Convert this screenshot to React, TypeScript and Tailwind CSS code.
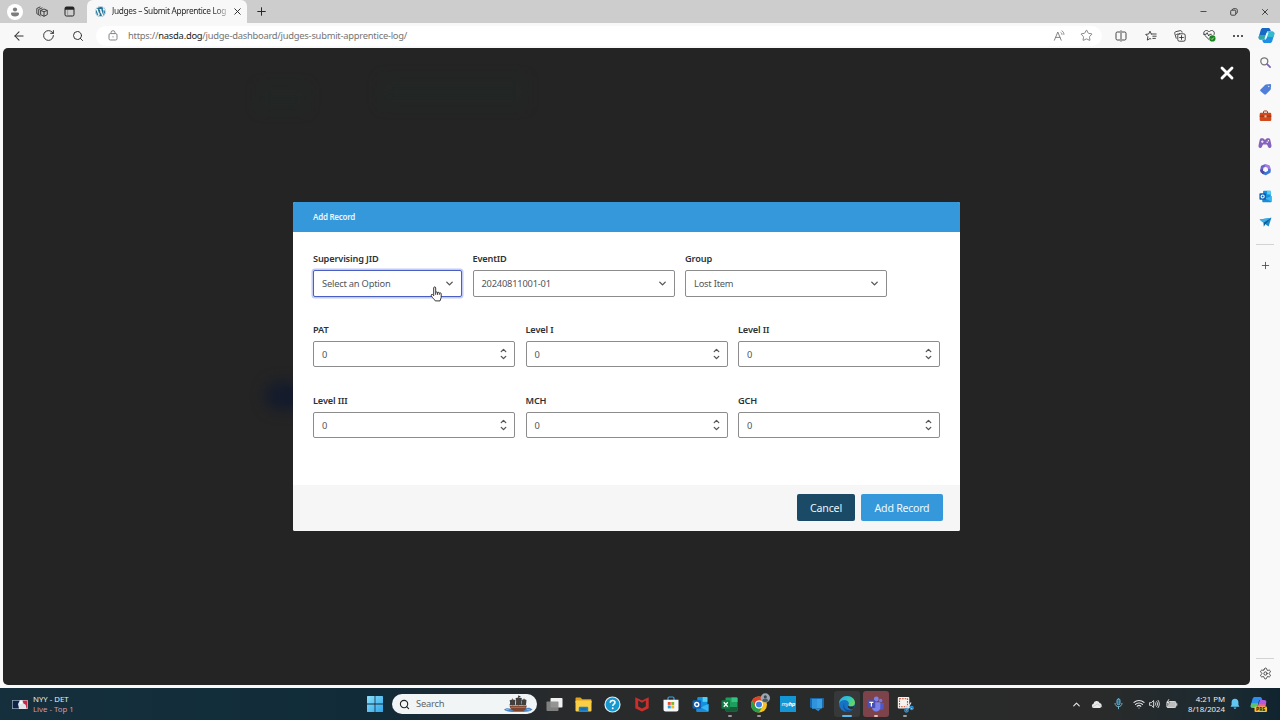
import type { ReactNode } from "react";
import {
  ArrowLeft,
  ChevronDown,
  ChevronUp,
  Minus,
  Plus,
  RotateCw,
  Search,
  Settings,
  Star,
  Wifi,
  X,
} from "lucide-react";
import { FaWordpress } from "react-icons/fa";

interface SlotProps {
  className?: string;
  children?: ReactNode;
}

function Slot({ className = "", children }: SlotProps) {
  return (
    <div className={`flex shrink-0 items-center justify-center ${className}`}>
      {children}
    </div>
  );
}

/* ---------- browser icons ---------- */

function WorkspacesIcon() {
  return (
    <svg width="12" height="12" viewBox="0 0 12 12" fill="none" stroke="#333" strokeWidth="0.9" strokeLinejoin="round">
      <path d="M4.6 4.4 8 3l3.3 1.4v4.2L8 10.3 4.6 8.6Z" />
      <path d="M4.6 4.4 8 5.8l3.3-1.4M8 5.8v4.5" />
      <path d="M2.7 8.8V3.4L6.4 1.8M.8 7.6V2.5L4.4.8" />
      <path d="M2.7 8.8 4.6 10M.8 7.6l1.9 1.2" />
    </svg>
  );
}

function TabActionsIcon() {
  return (
    <svg width="11" height="11" viewBox="0 0 11 11" fill="none">
      <rect x="1" y="1" width="9" height="9" rx="1.4" stroke="#222" />
      <path d="M1 2.2C1 1.4 1.5 1 2.2 1h6.6c.7 0 1.2.4 1.2 1.2v1.6H1Z" fill="#222" />
      <path d="M3.6 4v6" stroke="#888" strokeWidth=".7" />
    </svg>
  );
}

function LockIcon() {
  return (
    <svg width="10" height="11" viewBox="0 0 10 11" fill="none" stroke="#777" strokeWidth=".9">
      <rect x="1" y="3.6" width="8" height="6.4" rx="1.3" />
      <path d="M3 3.6V2.7a2 2 0 0 1 4 0v.9" />
      <circle cx="5" cy="6.8" r=".6" fill="#777" stroke="none" />
    </svg>
  );
}

function ReadAloudIcon() {
  return (
    <svg width="13" height="12" viewBox="0 0 13 12" fill="none" stroke="#777" strokeWidth=".9" strokeLinecap="round" strokeLinejoin="round">
      <path d="M1.4 10.2 4.8 2l3.4 8.2M2.6 7.4H7" />
      <path d="M8 2.600c.7.400 1 1 1 1.800M9 .9c1.300.8 1.900 1.900 1.900 3.500" />
    </svg>
  );
}

function SplitIcon() {
  return (
    <svg width="12" height="12" viewBox="0 0 12 12" fill="none" stroke="#333" strokeWidth=".9" strokeLinecap="round">
      <path d="M4.600 2H2.300C1.500 2 1 2.500 1 3.300v5.400C1 9.500 1.500 10 2.300 10h2.300M7.400 2h2.300c.8 0 1.300.5 1.300 1.300v5.400c0 .8-.5 1.300-1.300 1.300H7.400M6 .7v10.600" />
    </svg>
  );
}

function FavoritesIcon() {
  return (
    <svg width="12" height="12" viewBox="0 0 12 12" fill="none" stroke="#333" strokeWidth=".9" strokeLinecap="round" strokeLinejoin="round">
      <path d="M6.300 4 5 1.200 3.700 4 .7 4.400l2.200 2.200-.6 3.500L5 8.500l.8.4M6.300 4h4.900M7.800 6.200h3.400M7.800 8.400h2.600" />
    </svg>
  );
}

function CollectionsIcon() {
  return (
    <svg width="12" height="12" viewBox="0 0 12 12" fill="none" stroke="#333" strokeWidth=".9" strokeLinecap="round" strokeLinejoin="round">
      <rect x="3.800" y="3.800" width="7.400" height="7.400" rx="1.500" />
      <path d="M7.500 5.600v3.800M5.600 7.500h3.800" />
      <path d="M2.200 8.200 .8 3.600C.5 2.700.9 2 1.700 1.700L6 .7c.9-.2 1.500.1 1.800.9l.2.600M3.800 4l-1.200.4" />
    </svg>
  );
}

function EssentialsIcon() {
  return (
    <svg width="13" height="13" viewBox="0 0 13 13" fill="none">
      <path
        d="M6 10.500 1.600 6.200C.4 5 .5 3.200 1.600 2.200 2.800 1.200 4.500 1.300 5.500 2.400l.6.6.6-.6c1-1.100 2.700-1.200 3.800-.2.9.9 1.100 2.200.6 3.300M.9 5.300h2.300l1-1.600L5.700 7l1.100-1.700h1.500"
        stroke="#333"
        strokeWidth=".9"
        strokeLinecap="round"
        strokeLinejoin="round"
      />
      <circle cx="9.400" cy="9.400" r="3.100" fill="#17841c" />
      <path d="m8 9.500 1 1 1.800-2" stroke="#d9f2da" strokeWidth=".8" />
    </svg>
  );
}

function CopilotIcon() {
  return (
    <svg width="17" height="17" viewBox="0 0 17 17">
      <path d="M5.200 1h5.200c1 0 1.600.6 1.900 1.500l.5 1.600H9.600L7 12.600H3C1 12.600.2 11.300.8 9.400l2-6.700C3.200 1.600 4 1 5.200 1Z" fill="#1769c4" />
      <path d="M1.200 8h6.900L7 12.600H3C1 12.600.2 11.300.8 9.400Z" fill="#2fa6a8" />
      <path d="M11.800 16H6.600c-1 0-1.600-.6-1.900-1.500l-.5-1.600h3.200L10 4.400h4c2 0 2.800 1.300 2.200 3.200l-2 6.700c-.4 1.100-1.200 1.700-2.400 1.700Z" fill="#1f8fe6" />
      <path d="M10 4.400h4c2 0 2.800 1.300 2.200 3.200L15.600 10H8.300Z" fill="#35b9cf" />
      <path d="M8.600 5.600h2L8.400 11.800h-2Z" fill="#e9fbff" />
    </svg>
  );
}

function RestoreIcon() {
  return (
    <svg width="8" height="8" viewBox="0 0 8 8" fill="none" stroke="#333" strokeWidth=".9">
      <rect x=".7" y="2.200" width="5" height="5" rx="1" />
      <path d="M2.500 2V1.700c0-.6.4-1 1-1h2.300c.9 0 1.500.6 1.500 1.500v2.200c0 .6-.4 1-1 1H6" />
    </svg>
  );
}

/* ---------- sidebar icons ---------- */

function SideSearchIcon() {
  return (
    <svg width="13" height="13" viewBox="0 0 13 13" fill="none" strokeLinecap="round">
      <circle cx="5.300" cy="5.300" r="3.500" stroke="#777" strokeWidth="1.300" />
      <path d="m8.100 8.100 3 3" stroke="#7b62b5" strokeWidth="1.700" />
    </svg>
  );
}

function TagIcon() {
  return (
    <svg width="13" height="13" viewBox="0 0 13 13">
      <path d="M7 1.500 11.200 1c.6 0 .9.300.9.900l-.3 4.200c0 .4-.2.700-.5 1L7 11.300c-.6.6-1.200.6-1.800 0L1.600 8.200C1 7.600 1 7 1.500 6.400L6 2c.3-.3.600-.5 1-.5Z" fill="#4f7fd9" />
      <circle cx="9.700" cy="3.500" r=".8" fill="#cfe0ff" />
    </svg>
  );
}

function BriefcaseIcon() {
  return (
    <svg width="13" height="12" viewBox="0 0 13 12">
      <path d="M4.500 3V1.800c0-.5.3-.8.8-.8h2.400c.5 0 .8.300.8.800V3" fill="none" stroke="#963216" strokeWidth="1" />
      <rect x=".7" y="2.700" width="11.600" height="8.300" rx="1.200" fill="#d0481c" />
      <path d="M.7 6.200h11.600" stroke="#8c2c10" strokeWidth=".8" />
      <rect x="5.400" y="5.200" width="2.200" height="2.200" rx=".4" fill="#f5b48d" />
    </svg>
  );
}

function GamesIcon() {
  return (
    <svg width="14" height="12" viewBox="0 0 14 12">
      <path d="M3.600 1.200h1.700l.9 1.400h1.600l.9-1.400h1.700c.9 0 1.500.5 1.800 1.400l1.200 5.300c.4 1.800-.4 3-1.500 3-.9 0-1.400-.5-2-1.500L9 7.400H5L4.100 9.400c-.6 1-1.100 1.500-2 1.500-1.100 0-1.900-1.200-1.500-3l1.200-5.300c.3-.9.900-1.400 1.800-1.400Z" fill="#8562bd" />
      <path d="M4.300 3.400v2.600M3 4.700h2.600" stroke="#fff" strokeWidth=".8" />
      <circle cx="9.200" cy="5.200" r=".7" fill="#fff" />
      <circle cx="10.400" cy="3.800" r=".7" fill="#fff" />
    </svg>
  );
}

function M365Icon() {
  return (
    <svg width="13" height="13" viewBox="0 0 13 13" fill="none" strokeWidth="2.800" strokeLinejoin="round">
      <path d="M7 2.300 3.200 3.800 2.500 8" stroke="#6a63c9" />
      <path d="M6 2.200 9.600 3.600 10.500 6.500" stroke="#a77be0" />
      <path d="M3.500 9.400 6.600 10.800 10.200 8.800 10.500 6" stroke="#3b78d4" />
      <path d="M2.500 6.500 2.700 8.400 5 10.200" stroke="#4d4aa6" />
    </svg>
  );
}

function OutlookIcon({ size = 13 }: { size?: number }) {
  return (
    <svg width={size} height={size} viewBox="0 0 16 16">
      <rect x="5" y="1" width="9.500" height="9" rx="1" fill="#1490df" />
      <path d="M10 1h4.500v4.500H10Z" fill="#50d0f5" />
      <path d="M4 7.500 9.500 11l6-3.500V14c0 .6-.4 1-1 1H5c-.6 0-1-.4-1-1Z" fill="#1b8ad8" />
      <path d="M15.500 7.500v7L8 10.600Z" fill="#35b8f1" />
      <rect x=".5" y="4" width="8" height="8" rx="1" fill="#0a5fb4" />
      <circle cx="4.500" cy="8" r="1.900" fill="none" stroke="#fff" strokeWidth="1.300" />
    </svg>
  );
}

function PlaneIcon() {
  return (
    <svg width="13" height="11" viewBox="0 0 13 11">
      <path d="M.6 2.600 12.400.8 9.600 9.600 6.500 7.200Z" fill="#1c87c9" />
      <path d="M.6 2.600 12.400.8 4.500 6Z" fill="#3aaee6" />
      <path d="M4.500 6 12.400.8 6.300 7.200 4.800 9.800Z" fill="#0f5d95" />
    </svg>
  );
}

/* ---------- taskbar icons ---------- */

function MlbIcon() {
  return (
    <svg width="16" height="9" viewBox="0 0 16 9">
      <rect width="16" height="9" rx="1.300" fill="#dfe6ea" />
      <path d="M1.500.6h6.300L6 4l1 4.400H1.500a1 1 0 0 1-1-1V1.600a1 1 0 0 1 1-1Z" fill="#0b2347" />
      <path d="M10.500.6h4a1 1 0 0 1 1 1v5.800a1 1 0 0 1-1 1l-.8-3.600-2.200-1.300Z" fill="#c32a48" />
      <circle cx="9" cy="2.500" r="1.300" fill="#fff" />
    </svg>
  );
}

function WindowsIcon() {
  return (
    <svg width="16" height="16" viewBox="0 0 16 16">
      <defs>
        <linearGradient id="win" x1="0" y1="0" x2="1" y2="1">
          <stop offset="0" stopColor="#8be0fb" />
          <stop offset="1" stopColor="#2fa5ea" />
        </linearGradient>
      </defs>
      <path d="M0 .6C0 .3.300 0 .6 0h7v7.600H0ZM8.400 0h7c.3 0 .6.300.6.600v7H8.400ZM0 8.400h7.600V16h-7a.6.600 0 0 1-.6-.6ZM8.400 8.400H16v7c0 .3-.3.600-.6.600h-7Z" fill="url(#win)" />
    </svg>
  );
}

function ShipIcon() {
  return (
    <svg width="30" height="18" viewBox="0 0 30 18">
      <path d="M1 14.500c3-2 5-1 7-.6h14c2-1.500 5-1.600 7.500.6-2 2.200-6 2.400-9 2.400H9c-3 0-6.500-.6-8-2.400Z" fill="#4b86c6" />
      <path d="M6.500 10.500h17.300c-.4 3-1.600 5-3.500 5.500H11c-2.300-.5-4-2.500-4.500-5.500Z" fill="#7b4530" />
      <path d="M8 12.300h14.500" stroke="#c08451" strokeWidth=".8" />
      <path d="M6.500 5.500c2-1.500 4-1.300 6-.5l-.5 5H6.400c.9-1.300 1-2.600.1-4.500ZM12.500 3.300c2-1.300 4.500-1 6.300-.2l-.6 7h-5.700c.8-2 .9-4.700 0-6.800ZM18.700 5c1.500-1 3.500-.8 4.800 0L23 10h-4.800c.7-1.500 1-3.500.5-5Z" fill="#3d3f41" />
      <path d="M15.500.6v10M9.500 3.500v7M21 3.500v7" stroke="#4d4037" strokeWidth=".7" />
      <path d="M15.500.6 18 1.500l-2.500 1Z" fill="#333" />
      <path d="m3 14.800 3-.8M24 14.500l3 .5" stroke="#d8e9f8" strokeWidth=".5" />
    </svg>
  );
}

function TaskViewIcon() {
  return (
    <svg width="17" height="15" viewBox="0 0 17 15">
      <rect x="4.500" y="1" width="12" height="9.500" rx=".8" fill="#f1f1f1" />
      <rect x=".5" y="4.500" width="12" height="9.500" rx=".8" fill="#8a8a8a" fillOpacity=".9" />
    </svg>
  );
}

function FolderIcon() {
  return (
    <svg width="17" height="15" viewBox="0 0 17 15">
      <path d="M.5 1.500c0-.6.4-1 1-1h4l1.800 1.700h8.200c.6 0 1 .4 1 1V6H.5Z" fill="#dfa321" />
      <rect x=".5" y="3.500" width="16" height="11" rx="1" fill="#fbce45" />
      <path d="M3.800 14.500v-3.300c0-.9.500-1.400 1.400-1.400h6.600c.9 0 1.400.5 1.400 1.400v3.300Z" fill="#1f7fc6" />
      <path d="M5.500 12h6" stroke="#0f5c98" />
    </svg>
  );
}

function HelpIcon() {
  return (
    <svg width="17" height="17" viewBox="0 0 17 17" fill="none">
      <circle cx="8.500" cy="8.500" r="7.500" fill="#1798cf" stroke="#d9f0fa" strokeWidth="1.200" />
      <path d="M6.200 6.700c0-1.500 1-2.300 2.400-2.300s2.400.8 2.400 2.100c0 1.700-2.300 1.700-2.300 3.600" stroke="#fff" strokeWidth="1.500" />
      <circle cx="8.700" cy="12.200" r=".95" fill="#fff" />
    </svg>
  );
}

function McAfeeIcon() {
  return (
    <svg width="14" height="16" viewBox="0 0 14 16">
      <path d="M.3 1.200 7 4.500l6.700-3.300v11L7 15.400.3 12.200Zm2.900 3.400v6L7 12.500l3.800-1.900v-6L7 6.700Z" fill="#c9302c" fillRule="evenodd" />
    </svg>
  );
}

function StoreIcon() {
  return (
    <svg width="16" height="16" viewBox="0 0 16 16">
      <path d="M5 4V2.200C5 1.500 5.400 1 6.200 1h3.600c.8 0 1.200.5 1.200 1.200V4" fill="none" stroke="#3aa3df" strokeWidth="1.200" />
      <path d="M.5 3.800h15v9.600c0 1.200-.8 2-2 2h-11c-1.200 0-2-.8-2-2Z" fill="#f5f7f9" />
      <path d="M4.800 6h2.900v2.900H4.800Z" fill="#e8502b" />
      <path d="M8.300 6h2.900v2.900H8.300Z" fill="#7cb52a" />
      <path d="M4.800 9.500h2.900v2.900H4.800Z" fill="#1fa2e4" />
      <path d="M8.300 9.500h2.900v2.900H8.300Z" fill="#f8b61c" />
    </svg>
  );
}

function ExcelIcon() {
  return (
    <svg width="17" height="15" viewBox="0 0 17 15">
      <rect x="4.500" y=".5" width="12" height="14" rx="1" fill="#1f9d5d" />
      <path d="M10.500.5h5c.6 0 1 .4 1 1V5h-6Z" fill="#33c481" />
      <path d="M4.500 10h12v3.500c0 .6-.4 1-1 1h-10c-.6 0-1-.4-1-1Z" fill="#165c38" />
      <rect x=".5" y="3.200" width="8.500" height="8.600" rx=".8" fill="#107c41" />
      <path d="m2.800 5.200 4 4.600M6.800 5.200l-4 4.600" stroke="#fff" strokeWidth="1.300" />
    </svg>
  );
}

function ChromeIcon() {
  return (
    <svg className="-mt-[2px] ml-[3px] shrink-0" width="22" height="20" viewBox="0 0 22 20">
      <circle cx="10" cy="11.500" r="8" fill="#f9c21a" />
      <path d="M3.100 7.500A8 8 0 0 1 16.900 7.500H10A4 4 0 0 0 6.500 13.500Z" fill="#e2402f" />
      <path d="M3.100 7.500A8 8 0 0 0 10 19.500l3.500-6A4 4 0 0 1 6.500 13.500Z" fill="#2a9d4b" />
      <circle cx="10" cy="11.500" r="3.900" fill="#fff" />
      <circle cx="10" cy="11.500" r="3" fill="#3f7fe8" />
      <circle cx="16.300" cy="5" r="4.700" fill="#9aa7b2" />
      <circle cx="16.300" cy="3.700" r="1.500" fill="#3b4854" />
      <path d="M13.300 7.800c.6-2 1.500-2.400 3-2.400s2.400.5 3 2.400c-1.600 1.700-4.400 1.700-6 0Z" fill="#4b5b69" />
    </svg>
  );
}

function BlueScreenIcon() {
  return (
    <svg width="16" height="15" viewBox="0 0 16 15">
      <rect x="1" y="1" width="14" height="10" rx="1" fill="#1a69ac" />
      <rect x="3" y="2" width="10" height="9.500" fill="#3aa0e4" />
      <path d="M3 2h5v9.500H3Z" fill="#2f94dc" />
      <path d="M5.500 11.500h6.500l-2.800 2.700-3.700-2.700Z" fill="#2a8bd2" />
    </svg>
  );
}

function EdgeIcon() {
  return (
    <svg width="18" height="18" viewBox="0 0 18 18">
      <defs>
        <linearGradient id="edge" x1="0" y1="0" x2="1" y2=".5">
          <stop offset="0" stopColor="#2aa8e8" />
          <stop offset=".6" stopColor="#32c8bd" />
          <stop offset="1" stopColor="#66d85c" />
        </linearGradient>
      </defs>
      <circle cx="9" cy="9" r="8" fill="#1672c4" />
      <path d="M1 8.500C1.300 4.300 4.700 1 9 1c4.600 0 8 3.300 8 6.800 0 2.400-1.800 3.800-4 3.800-1.700 0-2.900-.6-2.900-1.200 0-.5.8-.8.8-2C10.900 6.400 8.800 5 6.500 5 4 5 2 6.300 1 8.500Z" fill="url(#edge)" />
      <path d="M6.500 8.500C5 11.500 7.500 15.500 11.500 15.200c1.500-.1 2.900-.7 4-1.600C14 15.900 11.700 17 9 17 4.900 14.500 4.600 10 6.500 8.500Z" fill="#0e4f99" />
      <path d="M10.200 10.200c.3 1 1.500 1.500 3.300 1.400 1.200 0 2.400-.5 3-1.300-.2 1.300-.6 2.400-1.200 3.400-3.500.8-6.300-.8-5.100-3.500Z" fill="#2b2f33" />
    </svg>
  );
}

function TeamsIcon() {
  return (
    <svg width="17" height="16" viewBox="0 0 17 16">
      <circle cx="13.600" cy="4.500" r="1.800" fill="#6f78dc" />
      <circle cx="9.300" cy="3" r="2.400" fill="#7b83eb" />
      <path d="M11 6.700h5c.5 0 .8.300.8.800v3.800c0 1.600-1 2.800-2.500 2.800S11 13 11 12Z" fill="#5059c9" />
      <path d="M5 6.300h7.500c.5 0 .8.300.8.800v4.400c0 2.200-1.600 4-4.100 4S5 13.700 5 11.500Z" fill="#7b83eb" />
      <rect x=".5" y="4.300" width="7.800" height="7.800" rx=".8" fill="#4650b5" />
      <path d="M2.400 6.300h4M4.400 6.300v4.200" stroke="#fff" strokeWidth="1.200" />
    </svg>
  );
}

function SnipIcon() {
  return (
    <svg width="17" height="17" viewBox="0 0 17 17" fill="none">
      <rect x=".8" y="1" width="11.500" height="11.500" rx="1" fill="#f6f2ef" />
      <rect x="2.500" y="2.700" width="8" height="8" stroke="#c6452c" strokeWidth="1.100" strokeDasharray="1.600 1" />
      <path d="M9.500 14.500 14 6.500M8.500 9.500l7 3.200" stroke="#d7e3ec" strokeWidth="1.200" />
      <circle cx="9.500" cy="14.300" r="1.700" stroke="#2f93d4" strokeWidth="1.300" />
      <circle cx="14.700" cy="12" r="1.500" stroke="#2f93d4" strokeWidth="1.300" />
    </svg>
  );
}

function CloudIcon() {
  return (
    <svg width="12" height="9" viewBox="0 0 12 9">
      <path d="M2.700 8A2.200 2.200 0 0 1 2.500 3.700 3.200 3.200 0 0 1 8.600 3 2.600 2.600 0 0 1 9 8Z" fill="#e9e9e9" />
      <path d="M1 7.200 6.500 4l4.700 3" stroke="#b9b9b9" strokeWidth=".6" fill="none" />
    </svg>
  );
}

function MicIcon() {
  return (
    <svg width="9" height="12" viewBox="0 0 9 12" fill="none" stroke="#6fb6d2" strokeWidth="1" strokeLinecap="round">
      <rect x="3" y=".8" width="3" height="6" rx="1.500" fill="#2b6c8a" />
      <path d="M1 5.300c0 2 1.500 3.300 3.500 3.300S8 7.300 8 5.300M4.500 8.600v2.200" />
    </svg>
  );
}

function SpeakerIcon() {
  return (
    <svg width="11" height="10" viewBox="0 0 11 10" fill="none" stroke="#e4e4e4" strokeWidth=".9" strokeLinecap="round" strokeLinejoin="round">
      <path d="M.8 3.700h1.500L4.600 1.500v7L2.300 6.300H.8ZM6.300 3.700c.6.800.6 1.800 0 2.600M7.700 2.500c1.200 1.500 1.200 3.500 0 5M9 1.300c1.800 2.300 1.800 5.100 0 7.400" />
    </svg>
  );
}

function BatteryIcon() {
  return (
    <svg width="13" height="10" viewBox="0 0 13 10">
      <rect x="1.800" y="2.500" width="9" height="6" rx="1" fill="#bdbdbd" stroke="#f0f0f0" strokeWidth=".8" />
      <path d="M11.800 4.300v2.400" stroke="#eee" strokeWidth="1" />
      <path d="M3.500 0 1 4h1.800L2 6.800 5 3H3.200L4.500 0Z" fill="#fff" stroke="#222" strokeWidth=".4" />
    </svg>
  );
}

function BellIcon() {
  return (
    <svg width="10" height="12" viewBox="0 0 10 12">
      <path d="M5 .8C2.900.8 1.600 2.300 1.600 4.200v2.500L.6 8.800h8.800l-1-2.100V4.200C8.400 2.300 7.100.8 5 .8ZM3.600 9.500h2.800C6.200 10.400 5.700 10.800 5 10.800s-1.200-.4-1.400-1.300Z" fill="#62c8f2" />
    </svg>
  );
}

function CopilotPreIcon() {
  return (
    <svg width="18" height="17" viewBox="0 0 18 17">
      <path d="M5 1h5c1 0 1.600.6 1.900 1.500L12.300 4H9.200L7 12H3C1 12 .3 10.800.8 9l1.800-6.300C3 1.600 3.800 1 5 1Z" fill="#2c8ff0" />
      <path d="M1.300 7.300h7L7 12H3C1 12 .3 10.800.8 9Z" fill="#58c36c" />
      <path d="M9.800 4H14c2 0 2.700 1.300 2.200 3l-1.500 5H7.500Z" fill="#b05be0" />
      <path d="M8.700 8.300h7.200L14.700 12H7.500Z" fill="#ee6a8b" />
      <rect x="4.500" y="10.500" width="12.500" height="5.500" rx="1" fill="#f8bf2e" />
      <text x="10.700" y="15" fontSize="5" fontWeight="800" textAnchor="middle" fill="#3c2a00">PRE</text>
    </svg>
  );
}

/* ---------- browser chrome ---------- */

function TabStrip() {
  return (
    <div className="flex h-[23px] shrink-0 items-center bg-[#cdcdcd]">
      <Slot className="w-[29px]">
        <div className="flex h-4 w-4 items-center justify-center rounded-full bg-white">
          <svg width="10" height="10" viewBox="0 0 10 10" fill="#7d7d7d">
            <circle cx="5" cy="2.500" r="2.100" />
            <path d="M1 6.800c0-.8.500-1.300 1.300-1.300h5.400c.8 0 1.300.5 1.300 1.300C9 8.600 7.300 9.600 5 9.600S1 8.600 1 6.800Z" />
          </svg>
        </div>
      </Slot>
      <Slot className="w-[25px]">
        <WorkspacesIcon />
      </Slot>
      <Slot className="w-[31px]">
        <TabActionsIcon />
      </Slot>
      <div className="ml-[2px] flex h-full w-40 items-center rounded-t-md bg-[#f8f8f8] pl-2">
        <FaWordpress size={11} color="#21759b" className="shrink-0" />
        <span className="ml-[6px] w-[115px] whitespace-nowrap bg-linear-to-r from-[#222] from-88% to-[#bbb] bg-clip-text text-[8.300px] tracking-[-0.32px] text-transparent">
          Judges – Submit Apprentice Log
        </span>
        <Slot className="ml-1 w-3">
          <X size={11} color="#222" />
        </Slot>
      </div>
      <Slot className="ml-[7.500px] w-[14px]">
        <Plus size={13} strokeWidth={1.800} color="#222" />
      </Slot>
      <Slot className="ml-auto w-[30px]">
        <Minus size={9} color="#222" />
      </Slot>
      <Slot className="w-[31px]">
        <RestoreIcon />
      </Slot>
      <Slot className="w-[31px]">
        <X size={10} color="#222" />
      </Slot>
    </div>
  );
}

function Toolbar() {
  return (
    <div className="flex h-[25px] shrink-0 items-center bg-[#f8f8f8]">
      <Slot className="ml-1 w-[29px]">
        <ArrowLeft size={14} strokeWidth={1.800} color="#333" />
      </Slot>
      <Slot className="w-[30px]">
        <RotateCw size={13} strokeWidth={1.800} color="#333" />
      </Slot>
      <Slot className="w-[29px]">
        <Search size={12} strokeWidth={2} color="#333" />
      </Slot>
      <div className="ml-1 flex h-5 w-[1008px] items-center rounded-full bg-white pl-3">
        <LockIcon />
        <span className="ml-[10px] pt-px text-[9.400px] tracking-[-0.25px] text-[#757575]">
          https://<span className="text-[#1b1b1b]">nasda.dog</span>
          /judge-dashboard/judges-submit-apprentice-log/
        </span>
        <Slot className="ml-auto w-[27px]">
          <ReadAloudIcon />
        </Slot>
        <Slot className="mr-[2.500px] w-[27px]">
          <Star size={13} strokeWidth={1.600} color="#777" />
        </Slot>
      </div>
      <Slot className="ml-[3px] w-[31px]">
        <SplitIcon />
      </Slot>
      <Slot className="w-[29px]">
        <FavoritesIcon />
      </Slot>
      <Slot className="w-[30px]">
        <CollectionsIcon />
      </Slot>
      <Slot className="w-[29px]">
        <EssentialsIcon />
      </Slot>
      <Slot className="w-[28px] gap-[2px]">
        <span className="h-[2px] w-[2px] rounded-full bg-[#222]" />
        <span className="h-[2px] w-[2px] rounded-full bg-[#222]" />
        <span className="h-[2px] w-[2px] rounded-full bg-[#222]" />
      </Slot>
      <Slot className="-ml-4 ml-auto w-[28px]">
        <CopilotIcon />
      </Slot>
    </div>
  );
}

function Sidebar() {
  const icons = [
    <SideSearchIcon />,
    <TagIcon />,
    <BriefcaseIcon />,
    <GamesIcon />,
    <M365Icon />,
    <OutlookIcon />,
    <PlaneIcon />,
  ];
  return (
    <div className="flex w-[30px] shrink-0 flex-col items-center pt-[1.500px]">
      {icons.map((icon, i) => (
        <Slot key={i} className="h-[26.700px] w-full">
          {icon}
        </Slot>
      ))}
      <div className="mt-[7.500px] h-px w-[18px] bg-[#d3d3d3]" />
      <Slot className="mt-[14px] h-[14px]">
        <Plus size={11} strokeWidth={1.800} color="#444" />
      </Slot>
      <div className="mt-auto h-px w-[18px] bg-[#d3d3d3]" />
      <Slot className="mb-2 mt-[7px] h-[14px]">
        <Settings size={13} strokeWidth={1.800} color="#444" />
      </Slot>
    </div>
  );
}

/* ---------- modal ---------- */

interface FieldProps {
  label: string;
  value: string;
  type: "select" | "number";
  width?: string;
  focused?: boolean;
}

function Field({ label, value, type, width = "w-[202px]", focused = false }: FieldProps) {
  return (
    <div className={`flex flex-col ${width}`}>
      <label className="mb-[5px] h-[13px] text-[9.200px] font-semibold leading-[13px] tracking-[-0.15px] text-[#2c3338]">
        {label}
      </label>
      <div
        className={`flex h-[26.500px] items-center rounded-[2px] border bg-white pl-2 pr-[6px] text-[9.300px] tracking-[-0.2px] text-[#50565b] ${
          focused
            ? "border-[#4a5fc4] shadow-[0_0_0_1.500px_#c3cbf3]"
            : "border-[#8c8c8c]"
        }`}
      >
        <span className="pt-[1.500px]">{value}</span>
        {type === "select" ? (
          <ChevronDown size={11} strokeWidth={3} color="#555" className="ml-auto" />
        ) : (
          <span className="ml-auto flex flex-col items-center">
            <ChevronUp size={9} strokeWidth={3.600} color="#555" className="-mb-[2px]" />
            <ChevronDown size={9} strokeWidth={3.600} color="#555" />
          </span>
        )}
      </div>
    </div>
  );
}

const LEVEL_ROWS = [
  ["PAT", "Level I", "Level II"],
  ["Level III", "MCH", "GCH"],
];

function AddRecordModal() {
  return (
    <div className="flex h-[329px] w-[667px] flex-col overflow-hidden rounded-[2px] bg-white">
      <div className="flex h-[30px] items-center bg-[#3498db] pl-5 text-[8px] font-semibold tracking-[-0.25px] text-[#eaf5fc]">
        Add Record
      </div>
      <div className="flex flex-1 flex-col gap-[26.300px] px-5 pt-5">
        <div className="flex gap-[10.500px]">
          <Field label="Supervising JID" value="Select an Option" type="select" width="w-[149px]" focused />
          <Field label="EventID" value="20240811001-01" type="select" />
          <Field label="Group" value="Lost Item" type="select" />
        </div>
        {LEVEL_ROWS.map((row) => (
          <div key={row[0]} className="flex gap-[10.500px]">
            {row.map((label) => (
              <Field key={label} label={label} value="0" type="number" />
            ))}
          </div>
        ))}
      </div>
      <div className="flex h-[46px] items-center justify-end gap-[6px] bg-[#f6f6f6] pb-px pr-[17px]">
        <button className="h-[27px] w-[58px] rounded-[2px] bg-[#1a4a66] pt-[2px] text-[10.600px] tracking-[-0.15px] text-[#eef4f8]">
          Cancel
        </button>
        <button className="h-[27px] w-[82px] rounded-[2px] bg-[#3498db] pt-[2px] text-[10.600px] tracking-[-0.25px] text-[#f0f8fd]">
          Add Record
        </button>
      </div>
    </div>
  );
}

function HandCursor() {
  return (
    <svg
      className="absolute left-[427px] top-[238px]"
      width="13"
      height="16"
      viewBox="0 0 13 16"
      fill="#fff"
      stroke="#222"
      strokeWidth=".9"
      strokeLinejoin="round"
    >
      <path d="M3.700 9.700V2c0-.7.400-1.100 1-1.100s1 .4 1 1.100v4.600c.2-.5.500-.7.900-.7.600 0 .9.400.9 1 .2-.4.500-.6.900-.6.600 0 .9.400.9 1 .2-.3.500-.5.900-.5.600 0 1 .4 1 1.100v3.400c0 1.200-.9 2.100-1.200 3.600H5.300C4.800 13.700 2.500 12 1.300 9.900c-.4-.7-.2-1.200.2-1.400.8-.4 1.500.2 2.200 1.200Z" />
      <path d="M5.700 6.600v2.200M7.500 7v1.800M9.300 7.300v1.500" fill="none" />
    </svg>
  );
}

function Page() {
  return (
    <div className="relative ml-[3px] flex h-[637px] w-[1247px] shrink-0 items-start justify-center overflow-hidden rounded-[5px] bg-[#242424]">
      {/* dimmed page content showing through the overlay */}
      <div className="absolute left-[262px] top-[334px] h-7 w-12 rounded-full bg-[#141b2c] blur-[7px]" />
      <div className="absolute left-[378px] top-[30px] h-7 w-36 bg-[#222625] blur-[6px]" />
      <div className="absolute left-[256px] top-[38px] h-6 w-12 bg-[#222625] blur-[6px]" />
      <div className="relative mt-[154px]">
        <AddRecordModal />
      </div>
      <HandCursor />
      <div className="absolute right-[13px] top-[15px]">
        <X size={20} strokeWidth={3.400} color="#fff" />
      </div>
    </div>
  );
}

/* ---------- taskbar ---------- */

interface TaskItem {
  name: string;
  icon: ReactNode;
  mark?: string;
  bg?: string;
}

const RUNNING = "w-1 bg-[#9a9a9a]";

const TASKS: TaskItem[] = [
  { name: "taskview", icon: <TaskViewIcon /> },
  { name: "files", icon: <FolderIcon /> },
  { name: "help", icon: <HelpIcon /> },
  { name: "mcafee", icon: <McAfeeIcon /> },
  { name: "store", icon: <StoreIcon /> },
  { name: "outlook", icon: <OutlookIcon size={17} /> },
  { name: "excel", icon: <ExcelIcon />, mark: RUNNING },
  { name: "chrome", icon: <ChromeIcon />, mark: RUNNING },
  {
    name: "myhp",
    icon: (
      <span className="flex h-4 w-4 items-center justify-center bg-[#1496d4] text-[6px] italic tracking-[-0.5px] text-white">
        my<b>hp</b>
      </span>
    ),
  },
  { name: "screen", icon: <BlueScreenIcon /> },
  { name: "edge", icon: <EdgeIcon />, mark: "w-[10px] bg-[#5cb8ea]", bg: "bg-[#363839]" },
  { name: "teams", icon: <TeamsIcon />, mark: "w-1 bg-[#e6b9bd]", bg: "bg-[#7d434b]" },
  { name: "snip", icon: <SnipIcon />, mark: RUNNING },
];

function Taskbar() {
  return (
    <div className="flex h-8 shrink-0 items-center bg-[linear-gradient(90deg,#15303c_0,#112b39_370px,#292a2b_560px,#2a2a2a_1100px,#1b2a31_1230px,#10242f_1280px)]">
      <Slot className="ml-3 w-4">
        <MlbIcon />
      </Slot>
      <div className="ml-[5px] w-[331px] text-[7.800px] leading-[10.500px]">
        <div className="text-[#e6ecef]">NYY - DET</div>
        <div className="text-[#d39aa5]">Live - Top 1</div>
      </div>
      <Slot className="ml-[3px] w-4">
        <WindowsIcon />
      </Slot>
      <div className="ml-[9px] flex h-5 w-[145px] items-center rounded-full bg-[#f1f5f6] pl-[7px] pr-1">
        <Search size={11} strokeWidth={2.400} color="#222" />
        <span className="ml-[6px] text-[9.300px] tracking-[-0.2px] text-[#5d6366]">Search</span>
        <span className="ml-auto">
          <ShipIcon />
        </span>
      </div>
      <div className="ml-[2.500px] flex">
        {TASKS.map((t) => (
          <div key={t.name} className="flex h-8 w-[29.250px] items-center justify-center">
            <div className={`relative flex h-[26px] w-[26px] items-center justify-center rounded-[3px] ${t.bg ?? ""}`}>
              {t.icon}
              {t.mark && (
                <span className={`absolute bottom-0 left-1/2 h-[2px] -translate-x-1/2 rounded-full ${t.mark}`} />
              )}
            </div>
          </div>
        ))}
      </div>
      <Slot className="ml-auto w-[20px]">
        <ChevronUp size={11} strokeWidth={2.600} color="#e6e6e6" />
      </Slot>
      <Slot className="w-[22px]">
        <CloudIcon />
      </Slot>
      <Slot className="w-[20px]">
        <MicIcon />
      </Slot>
      <Slot className="ml-[2px] w-[17px]">
        <Wifi size={12} strokeWidth={2.400} color="#e4e4e4" />
      </Slot>
      <Slot className="w-[15px]">
        <SpeakerIcon />
      </Slot>
      <Slot className="w-[18px]">
        <BatteryIcon />
      </Slot>
      <div className="w-[45px] text-right text-[7.800px] leading-[10.500px] text-[#ececec]">
        <div>4:21 PM</div>
        <div>8/18/2024</div>
      </div>
      <Slot className="ml-[4px] w-3">
        <BellIcon />
      </Slot>
      <Slot className="ml-[9px] mr-3 w-[18px]">
        <CopilotPreIcon />
      </Slot>
    </div>
  );
}

export default function App() {
  return (
    <div className="flex h-[720px] w-[1280px] flex-col overflow-hidden bg-[#f9f9f9] font-['Noto_Sans','Open_Sans',sans-serif]">
      <TabStrip />
      <Toolbar />
      <div className="flex h-[640px] shrink-0">
        <Page />
        <Sidebar />
      </div>
      <Taskbar />
    </div>
  );
}
